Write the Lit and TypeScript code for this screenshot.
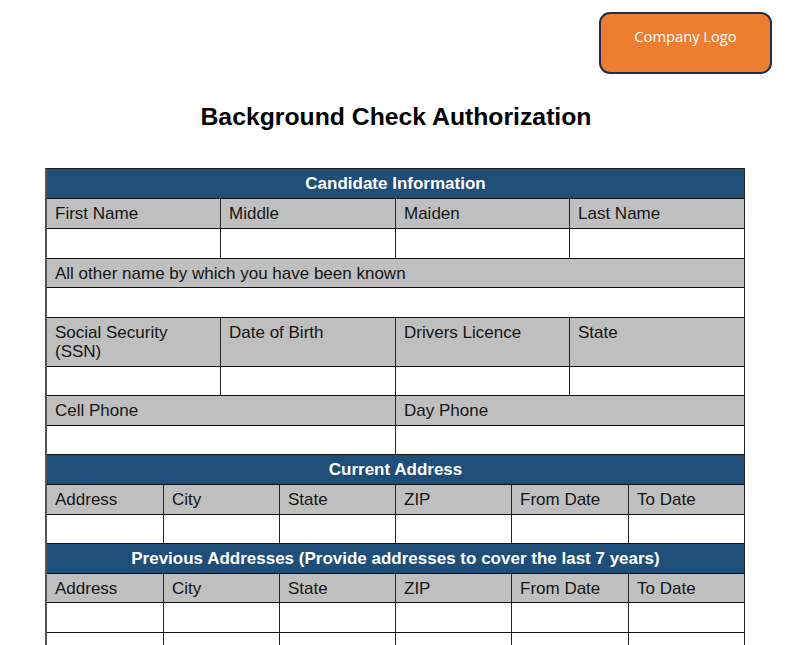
import { LitElement, html, css } from "lit";
import { customElement } from "lit/decorators.js";

type Row = { h: number; kind: "head" | "label" | "blank"; cells: string[] };

const ADDR = ["Address", "City", "State", "ZIP", "From Date", "To Date"];
const blank = (n: number, h: number): Row => ({ h, kind: "blank", cells: Array(n).fill("") });

const ROWS: Row[] = [
  { h: 30, kind: "head", cells: ["Candidate Information"] },
  { h: 30, kind: "label", cells: ["First Name", "Middle", "Maiden", "Last Name"] },
  blank(4, 30),
  { h: 29, kind: "label", cells: ["All other name by which you have been known"] },
  blank(1, 30),
  { h: 49, kind: "label", cells: ["Social Security (SSN)", "Date of Birth", "Drivers Licence", "State"] },
  blank(4, 29),
  { h: 30, kind: "label", cells: ["Cell Phone", "Day Phone"] },
  blank(2, 29),
  { h: 30, kind: "head", cells: ["Current Address"] },
  { h: 30, kind: "label", cells: ADDR },
  blank(6, 29),
  { h: 30, kind: "head", cells: ["Previous Addresses (Provide addresses to cover the last 7 years)"] },
  { h: 29, kind: "label", cells: ADDR },
  blank(6, 30),
  blank(6, 30),
];

@customElement("app-root")
export class AppRoot extends LitElement {
  static styles = css`
    :host {
      display: block;
      width: 794px;
      height: 645px;
      overflow: hidden;
      background: #fff;
      font-family: "Liberation Sans", Arial, sans-serif;
      color: #151515;
    }
    .top {
      display: flex;
      justify-content: flex-end;
      padding: 12px 22px 0 0;
    }
    .logo {
      box-sizing: border-box;
      width: 173px;
      height: 62px;
      padding-top: 12px;
      background: #ed7d31;
      border: 2px solid #1f2d4d;
      border-radius: 11px;
      color: #fff;
      font-family: "Open Sans", sans-serif;
      font-size: 14.7px;
      line-height: 20px;
      text-align: center;
    }
    h1 {
      margin: 28px 0 0;
      padding-right: 2px;
      font-size: 24.75px;
      line-height: 30px;
      font-weight: 700;
      color: #000;
      text-align: center;
    }
    .table {
      box-sizing: border-box;
      width: 700px;
      margin: 36px 0 0 45px;
      border: 1px solid #222;
      border-left: 2px solid #555;
      border-bottom: 0;
    }
    .row {
      box-sizing: border-box;
      display: grid;
      border-bottom: 1px solid #111;
    }
    .c1 { grid-template-columns: 1fr; }
    .c2 { grid-template-columns: 348px 349px; }
    .c4 { grid-template-columns: 173px 175px 174px 175px; }
    .c6 { grid-template-columns: 116px 116px 116px 116px 117px 116px; }
    .cell {
      box-sizing: border-box;
      min-width: 0;
      padding: 5px 8px 0 8px;
      font-size: 17px;
      line-height: 19px;
      border-left: 1px solid #222;
    }
    .cell:first-child {
      border-left: 0;
    }
    .label .cell {
      background: #bfbfbf;
    }
    .head .cell {
      background: #1f4e79;
      color: #fff;
      font-weight: 700;
      text-align: center;
    }
  `;

  render() {
    return html`
      <div class="top"><div class="logo">Company Logo</div></div>
      <h1>Background Check Authorization</h1>
      <div class="table">
        ${ROWS.map(
          (r) => html`<div class="row ${r.kind} c${r.cells.length}" style="height:${r.h}px">
            ${r.cells.map((c) => html`<div class="cell">${c}</div>`)}
          </div>`
        )}
      </div>
    `;
  }
}
